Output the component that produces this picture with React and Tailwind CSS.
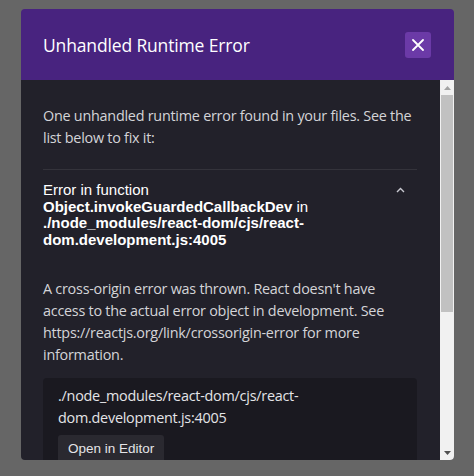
import React from 'react';

// Scrollbar is drawn, not a real overflow, so the thumb sits where the screenshot has it
const FakeScrollbar = () => (
    <div className="w-[14px] shrink-0 bg-[#f1f1f1] flex flex-col items-center">
        <div className="h-[15px] w-full flex items-center justify-center">
            <svg width="7" height="4" viewBox="0 0 7 4"><path d="M0 4 L3.5 0 L7 4 Z" fill="#a3a3a3" /></svg>
        </div>
        <div className="h-[217px] w-[12px] bg-[#c1c1c1]" />
        <div className="flex-1" />
        <div className="h-[15px] w-full flex items-center justify-center">
            <svg width="7" height="4" viewBox="0 0 7 4"><path d="M0 0 L7 0 L3.5 4 Z" fill="#505050" /></svg>
        </div>
    </div>
);

const App = () => {
    const ui = { fontFamily: '"Open Sans", "Noto Sans", sans-serif' };
    const arial = { fontFamily: '"Liberation Sans", Arial, sans-serif' };

    return (
        <div className="h-[476px] w-[474px] bg-[#666666] pt-[9px] pl-[21px] overflow-hidden">
            <div className="w-[433px] h-[451px] rounded-[4px] overflow-hidden flex flex-col">
                {/* Header */}
                <div className="h-[71px] shrink-0 bg-[#48237f] flex items-center justify-between pl-[22px] pr-[23px]" style={ui}>
                    <h1 className="pt-[2px] text-[17.5px] text-white tracking-[-0.15px]">Unhandled Runtime Error</h1>
                    <button className="w-[26px] h-[26px] rounded-[3px] bg-[#6b3aa7] flex items-center justify-center">
                        <svg width="12" height="12" viewBox="0 0 12 12">
                            <path d="M1 1 L11 11 M11 1 L1 11" stroke="white" strokeWidth="1.8" strokeLinecap="round" />
                        </svg>
                    </button>
                </div>

                {/* Body */}
                <div className="flex-1 flex bg-[#22212a] min-h-0">
                    <div className="flex-1 overflow-hidden pl-[22px] pr-[23px] pt-[25px]">
                        <p className="text-[14.4px] leading-[22px] text-[#d4d4d8] tracking-[-0.25px]" style={ui}>
                            One unhandled runtime error found in your files. See the list below to fix it:
                        </p>

                        <div className="mt-[20px] border-t border-[#34333b]" />

                        <div className="pt-[12px] flex justify-between">
                            <div className="text-[15px] leading-[16.5px] text-white" style={arial}>
                                <div>Error in function</div>
                                <div>
                                    <span className="font-bold">Object.invokeGuardedCallbackDev</span> in{' '}
                                    <span className="font-bold">./node_modules/react-dom/cjs/react-dom.development.js:4005</span>
                                </div>
                            </div>
                            <div className="pt-[5px] pr-[12px]">
                                <svg width="9" height="6" viewBox="0 0 9 6">
                                    <path d="M1 5 L4.5 1.5 L8 5" stroke="#c9c9d1" strokeWidth="1.4" fill="none" />
                                </svg>
                            </div>
                        </div>

                        <p className="mt-[30px] text-[14.4px] leading-[22px] text-[#d4d4d8] tracking-[-0.25px]" style={ui}>
                            A cross-origin error was thrown. React doesn't have access to the actual error object in development. See https://reactjs.org/link/crossorigin-error for more information.
                        </p>

                        <div className="mt-[12px] rounded-[4px] bg-[#1a1920] pl-[15px] pr-[15px] pt-[7px] pb-[10px]">
                            <div className="text-[14.4px] leading-[22px] text-[#e4e4e7] tracking-[-0.25px]" style={ui}>
                                ./node_modules/react-dom/cjs/react-dom.development.js:4005
                            </div>
                            <button className="mt-[6px] h-[28px] px-[10px] rounded-[3px] bg-[#2a2930] text-[13.5px] text-[#e4e4e7]" style={arial}>
                                Open in Editor
                            </button>
                        </div>
                    </div>
                    <FakeScrollbar />
                </div>
            </div>
        </div>
    );
};

export default App;
